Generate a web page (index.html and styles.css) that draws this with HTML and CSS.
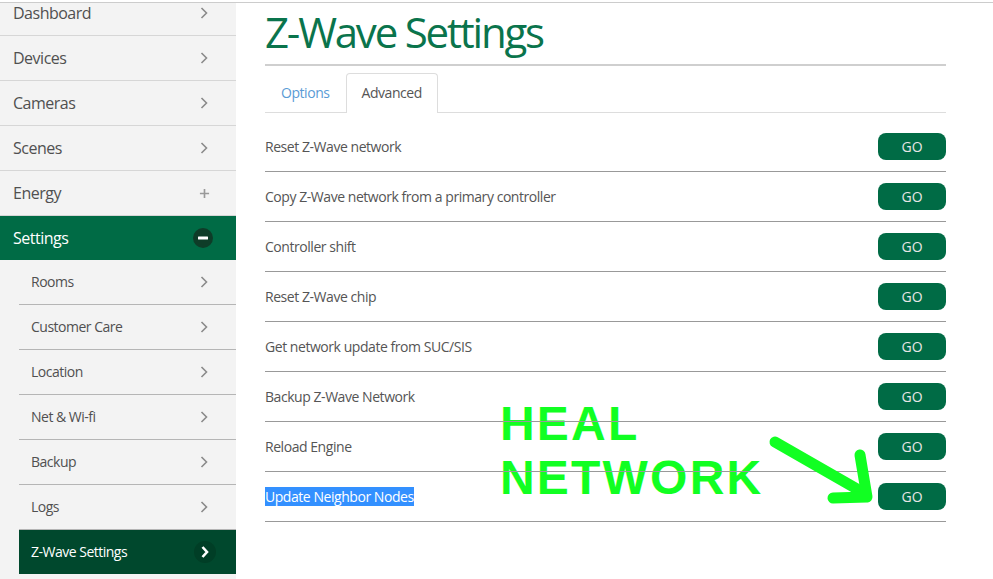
FILE: index.html
```html
<!DOCTYPE html>
<html lang="en">
<head>
<meta charset="utf-8">
<title>Z-Wave Settings</title>
<link rel="stylesheet" href="styles.css">
</head>
<body>
<div class="page">
  <aside class="sidebar">
    <ul class="nav">
      <li class="nav-item"><span>Dashboard</span><svg class="chev" viewBox="0 0 8 12"><path d="M1.5 1 L6.5 6 L1.5 11"/></svg></li>
      <li class="nav-item"><span>Devices</span><svg class="chev" viewBox="0 0 8 12"><path d="M1.5 1 L6.5 6 L1.5 11"/></svg></li>
      <li class="nav-item"><span>Cameras</span><svg class="chev" viewBox="0 0 8 12"><path d="M1.5 1 L6.5 6 L1.5 11"/></svg></li>
      <li class="nav-item"><span>Scenes</span><svg class="chev" viewBox="0 0 8 12"><path d="M1.5 1 L6.5 6 L1.5 11"/></svg></li>
      <li class="nav-item"><span>Energy</span><svg class="plus" viewBox="0 0 12 12"><path d="M6 1 V11 M1 6 H11"/></svg></li>
      <li class="nav-item open"><span>Settings</span><svg class="minus" viewBox="0 0 20 20"><circle cx="10" cy="10" r="10"/><rect x="5" y="8.5" width="10" height="3" rx="0.5"/></svg></li>
    </ul>
    <ul class="subnav">
      <li class="sub-item"><span>Rooms</span><svg class="chev" viewBox="0 0 8 12"><path d="M1.5 1 L6.5 6 L1.5 11"/></svg></li>
      <li class="sub-item"><span>Customer Care</span><svg class="chev" viewBox="0 0 8 12"><path d="M1.5 1 L6.5 6 L1.5 11"/></svg></li>
      <li class="sub-item"><span>Location</span><svg class="chev" viewBox="0 0 8 12"><path d="M1.5 1 L6.5 6 L1.5 11"/></svg></li>
      <li class="sub-item"><span>Net &amp; Wi-fi</span><svg class="chev" viewBox="0 0 8 12"><path d="M1.5 1 L6.5 6 L1.5 11"/></svg></li>
      <li class="sub-item"><span>Backup</span><svg class="chev" viewBox="0 0 8 12"><path d="M1.5 1 L6.5 6 L1.5 11"/></svg></li>
      <li class="sub-item"><span>Logs</span><svg class="chev" viewBox="0 0 8 12"><path d="M1.5 1 L6.5 6 L1.5 11"/></svg></li>
      <li class="sub-item active"><span>Z-Wave Settings</span><svg class="chev-active" viewBox="0 0 22 22"><circle cx="11" cy="11" r="11"/><path d="M8.5 6 L13 11 L8.5 16"/></svg></li>
    </ul>
  </aside>

  <main class="main">
    <h1 class="title">Z-Wave Settings</h1>
    <div class="tabs">
      <div class="tab">Options</div>
      <div class="tab current">Advanced</div>
    </div>
    <div class="rows">
      <div class="row"><span>Reset Z-Wave network</span><button class="go">GO</button></div>
      <div class="row"><span>Copy Z-Wave network from a primary controller</span><button class="go">GO</button></div>
      <div class="row"><span>Controller shift</span><button class="go">GO</button></div>
      <div class="row"><span>Reset Z-Wave chip</span><button class="go">GO</button></div>
      <div class="row"><span>Get network update from SUC/SIS</span><button class="go">GO</button></div>
      <div class="row"><span>Backup Z-Wave Network</span><button class="go">GO</button></div>
      <div class="row"><span>Reload Engine</span><button class="go">GO</button></div>
      <div class="row"><span class="selected">Update Neighbor Nodes</span><button class="go">GO</button></div>
    </div>
  </main>

  <div class="annotation">HEAL<br>NETWORK</div>
  <svg class="arrow" viewBox="0 0 120 80">
    <path d="M15 12 L104 63"/>
    <path d="M100 25 L107 67 L73 68"/>
  </svg>
</div>
</body>
</html>
```

FILE: styles.css
```css
html, body {
  margin: 0;
  padding: 0;
  background: #ffffff;
}

body {
  font-family: "Open Sans", "DejaVu Sans", sans-serif;
  color: #555555;
  padding-top: 2px;
  overflow: hidden;
}

.page {
  position: relative;
  display: flex;
  height: 576px;
  border-top: 1px solid #cccccc;
}

.sidebar {
  width: 236px;
  flex: none;
  background: #f3f3f3;
  overflow: hidden;
}

.nav, .subnav {
  list-style: none;
  margin: 0;
  padding: 0;
}

.nav {
  margin-top: -12px;
}

.nav-item {
  display: flex;
  align-items: center;
  justify-content: space-between;
  height: 44px;
  border-bottom: 1px solid #d6d6d6;
  padding: 0 28px 0 13px;
  font-size: 16px;
  letter-spacing: -0.5px;
  color: #505050;
}

.nav-item.open {
  background: #006b45;
  color: #ffffff;
  border-bottom: none;
  padding-right: 23px;
}

.subnav {
  margin-left: 19px;
}

.sub-item {
  display: flex;
  align-items: center;
  justify-content: space-between;
  height: 44px;
  border-bottom: 1px solid #b5b5b5;
  padding: 0 28px 1px 12px;
  box-sizing: border-box;
  height: 45px;
  font-size: 14px;
  letter-spacing: -0.5px;
  color: #505050;
}

.sub-item.active {
  background: #00482d;
  color: #ffffff;
  border-bottom: none;
  padding-right: 20px;
  height: 44px;
}

.chev {
  width: 8px;
  height: 12px;
  fill: none;
  stroke: #8a8a8a;
  stroke-width: 1.6;
}

.plus {
  width: 11px;
  height: 11px;
  fill: none;
  stroke: #999999;
  stroke-width: 1.8;
  margin-right: -2px;
}

.minus {
  width: 20px;
  height: 20px;
}
.minus circle { fill: #0e3c28; }
.minus rect { fill: #ffffff; }

.chev-active {
  width: 22px;
  height: 22px;
}
.chev-active circle { fill: #003e26; }
.chev-active path {
  fill: none;
  stroke: #ffffff;
  stroke-width: 2.6;
}

.main {
  flex: 1;
  padding: 0 47px 0 29px;
  position: relative;
}

.title {
  margin: 0;
  font-size: 42px;
  font-weight: 400;
  line-height: 57px;
  letter-spacing: -2.2px;
  color: #0a744c;
  padding-bottom: 4px;
  border-bottom: 2px solid #cfcfcf;
}

.tabs {
  display: flex;
  margin-top: 7px;
  border-bottom: 1px solid #dddddd;
  height: 39px;
}

.tab {
  padding: 0 15px;
  font-size: 14px;
  letter-spacing: -0.45px;
  line-height: 37px;
  color: #5a9bd5;
  border: 1px solid transparent;
  border-bottom: none;
  border-radius: 4px 4px 0 0;
}

.tab.current {
  color: #555555;
  border-color: #dddddd;
  background: #ffffff;
  box-sizing: border-box;
  line-height: 37px;
  margin-bottom: -1px;
  height: 40px;
}

.rows {
  margin-top: 9px;
  position: relative;
  z-index: 1;
}

.row {
  display: flex;
  align-items: center;
  justify-content: space-between;
  height: 49px;
  border-bottom: 1px solid #999999;
  font-size: 14px;
  letter-spacing: -0.45px;
  color: #555555;
}

.selected {
  background: #3390ff;
  color: #ffffff;
  line-height: 19px;
}

.go {
  width: 68px;
  height: 27px;
  border: none;
  border-radius: 8px;
  background: #006b45;
  color: #e6e6e6;
  font-family: "Open Sans", "DejaVu Sans", sans-serif;
  font-size: 14px;
  padding: 0;
}

.annotation {
  position: absolute;
  left: 500px;
  top: 394px;
  z-index: 0;
  font-family: "Liberation Sans", Arial, sans-serif;
  font-weight: 700;
  font-size: 48px;
  letter-spacing: 2.2px;
  line-height: 54px;
  color: #11ff22;
}

.arrow {
  position: absolute;
  left: 760px;
  top: 427px;
  width: 120px;
  height: 80px;
  z-index: 2;
  fill: none;
  stroke: #11ff22;
  stroke-width: 11;
  stroke-linecap: round;
  stroke-linejoin: round;
}
```
